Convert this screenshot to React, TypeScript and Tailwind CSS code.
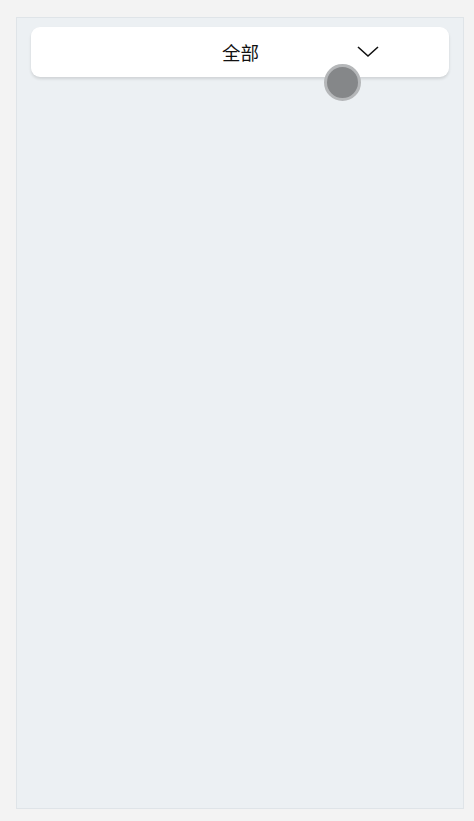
import React from "react";

export default function App() {
  return (
    <div className="w-[474px] h-[821px] bg-[#f3f3f3] overflow-hidden" style={{ fontFamily: '"Noto Sans CJK SC", "Noto Sans", sans-serif' }}>
      <div className="relative ml-[16px] mt-[17px] w-[448px] h-[792px] bg-[#ecf0f3] border border-[#dfe4e8] pt-[9px] px-[14px]">
        <div className="relative h-[50px] rounded-[9px] bg-white shadow-[0_2px_3px_rgba(0,0,0,0.12)] flex items-center">
          <span className="absolute left-[191px] top-[13px] text-[18.5px] leading-[24px] text-[#111]">全部</span>
          <svg className="absolute left-[325px] top-[18px]" width="24" height="14" viewBox="0 0 24 14" fill="none">
            <path d="M2 2 L12 11 L22 2" stroke="#111" strokeWidth="1.6" />
          </svg>
        </div>
        <div className="absolute left-[307px] top-[46px] w-[37px] h-[37px] rounded-full bg-[#858789] border-[3px] border-[#b5b7b9]" />
      </div>
    </div>
  );
}
